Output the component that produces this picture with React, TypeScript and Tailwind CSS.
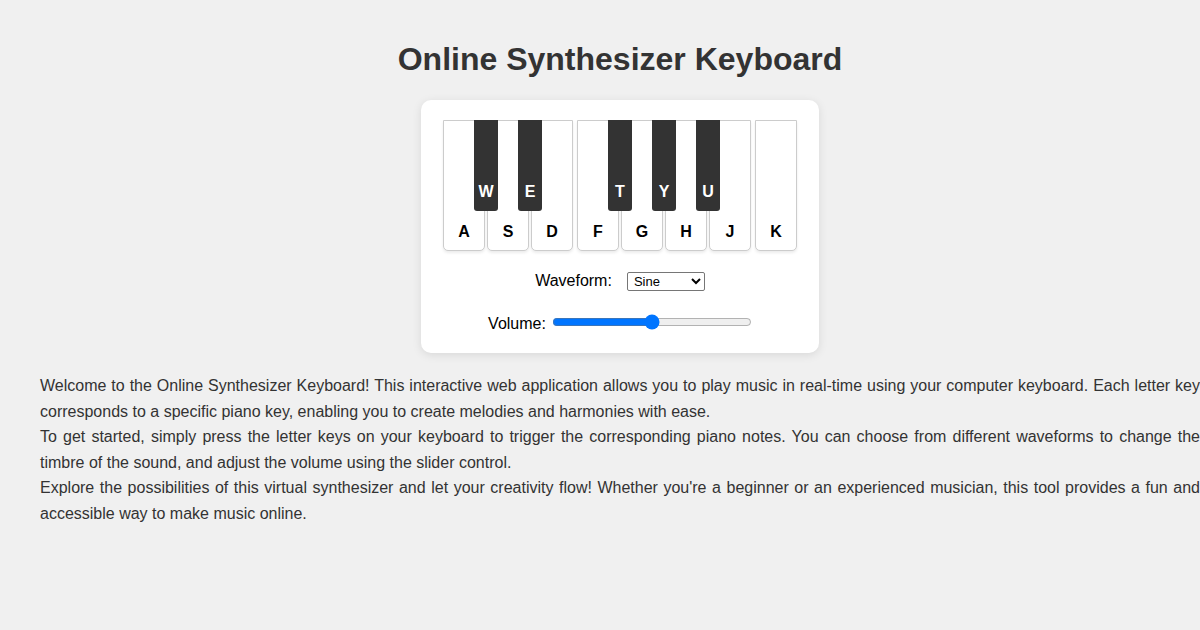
import { useState } from "react";

type Key = { label: string; black?: boolean };

const KEYS: Key[] = [
  { label: "A" },
  { label: "W", black: true },
  { label: "S" },
  { label: "E", black: true },
  { label: "D" },
  { label: "F" },
  { label: "T", black: true },
  { label: "G" },
  { label: "Y", black: true },
  { label: "H" },
  { label: "U", black: true },
  { label: "J" },
  { label: "K" },
];

function PianoKey({ label, black }: Key) {
  if (black) {
    return (
      <div className="relative z-10 mx-[-13px] flex h-[91px] w-[24px] shrink-0 items-end justify-center rounded-b-[3px] bg-[#333] pb-[10px] text-[16px] leading-[19px] font-bold text-white">
        {label}
      </div>
    );
  }
  return (
    <div className="mx-[2px] flex h-[131px] w-[42px] shrink-0 items-end justify-center rounded-b-[5px] border border-[#ccc] bg-white pb-[9px] text-[16px] leading-[19px] font-bold text-black shadow-[0_2px_3px_rgba(0,0,0,0.08)]">
      {label}
    </div>
  );
}

export default function App() {
  const [wave, setWave] = useState("sine");
  const [volume, setVolume] = useState(50);

  return (
    <div className="h-[630px] w-[1200px] overflow-hidden bg-[#f0f0f0] font-['Liberation_Sans',Arial,sans-serif] text-[#333]">
      <div className="w-[1240px] pt-[20px]">
        <h1 className="mt-[21px] mb-[22px] text-center text-[32px] leading-[37px] font-bold">
          Online Synthesizer Keyboard
        </h1>

        <div className="flex justify-center">
          <div className="rounded-[10px] bg-white p-[20px] shadow-[0_2px_10px_rgba(0,0,0,0.1)]">
            <div className="flex items-start">
              {KEYS.map((k) => (
                <PianoKey key={k.label} {...k} />
              ))}
            </div>

            <div className="mt-[20px] flex h-[20px] items-center justify-center text-[16px] text-black">
              <label htmlFor="wave" className="mr-[15px]">
                Waveform:
              </label>
              <select
                id="wave"
                value={wave}
                onChange={(e) => setWave(e.target.value)}
                className="h-[19px] w-[78px] rounded-[2px] border border-[#767676] bg-white pl-[2px] text-[13px] leading-[15px] text-black"
              >
                <option value="sine">Sine</option>
                <option value="square">Square</option>
                <option value="sawtooth">Sawtooth</option>
                <option value="triangle">Triangle</option>
              </select>
            </div>

            <div className="mt-[20px] flex h-[22px] items-center justify-center text-[16px] text-black">
              <label htmlFor="vol" className="mt-[4px] mr-[6px]">
                Volume:
              </label>
              <input
                id="vol"
                type="range"
                min={0}
                max={100}
                value={volume}
                onChange={(e) => setVolume(Number(e.target.value))}
                className="w-[200px] accent-[#0075ff]"
              />
            </div>
          </div>
        </div>

        <div className="mt-[20px] ml-[40px] w-[1160px] text-justify text-[16px] leading-[25.6px] text-[#333]">
          <p>
            Welcome to the Online Synthesizer Keyboard! This interactive web application allows you to play music in
            real-time using your computer keyboard. Each letter key corresponds to a specific piano key, enabling you
            to create melodies and harmonies with ease.
          </p>
          <p>
            To get started, simply press the letter keys on your keyboard to trigger the corresponding piano notes. You
            can choose from different waveforms to change the timbre of the sound, and adjust the volume using the
            slider control.
          </p>
          <p>
            Explore the possibilities of this virtual synthesizer and let your creativity flow! Whether you're a
            beginner or an experienced musician, this tool provides a fun and accessible way to make music online.
          </p>
        </div>
      </div>
    </div>
  );
}
